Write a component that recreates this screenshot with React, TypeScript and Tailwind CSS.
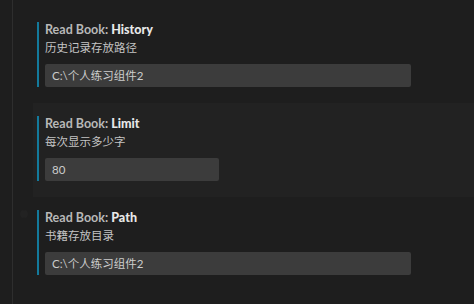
const items = [
  { name: "History", desc: "历史记录存放路径", value: "C:\\个人练习组件2", wide: true, active: false },
  { name: "Limit", desc: "每次显示多少字", value: "80", wide: false, active: true },
  { name: "Path", desc: "书籍存放目录", value: "C:\\个人练习组件2", wide: true, active: false },
];

export default function App() {
  return (
    <div
      className="w-[474px] h-[304px] bg-[#1e1e1e] flex overflow-hidden"
      style={{ fontFamily: 'Lato, "Noto Sans CJK SC", sans-serif' }}
    >
      <div className="w-[12px] shrink-0" />
      <div className="w-px shrink-0 bg-[#2e2e2e]" />
      <div className="flex-1 flex flex-col pt-[9px] pl-[20px]">
        {items.map((it) => (
          <div
            key={it.name}
            className={`relative h-[94px] shrink-0 pl-[4px] pt-[13px] ${it.active ? "bg-[#222222]" : ""}`}
          >
            {it.name === "Path" && (
              <div className="absolute left-[-13px] top-[13px] w-[8px] h-[8px] rounded-sm bg-[#222222]" />
            )}
            <div className="flex h-[65px]">
              <div className="w-[2px] bg-[#137a9c] shrink-0" />
              <div className="flex-1 pl-[6px]">
                <div className="text-[12.5px] leading-[16px] font-bold text-[#b8b8b8] pt-[0px]">
                  Read Book: <span className="font-black text-[#e8e8e8]">{it.name}</span>
                </div>
                <div className="text-[11.5px] leading-[16px] text-[#c4c4c4] mt-[2px]">{it.desc}</div>
                <div
                  className={`mt-[8px] h-[23px] bg-[#3c3c3c] rounded-[2px] flex items-center pl-[7px] text-[11.5px] text-[#cccccc] ${it.wide ? "w-[366px]" : "w-[174px]"}`}
                >
                  {it.value}
                </div>
              </div>
            </div>
          </div>
        ))}
      </div>
    </div>
  );
}
